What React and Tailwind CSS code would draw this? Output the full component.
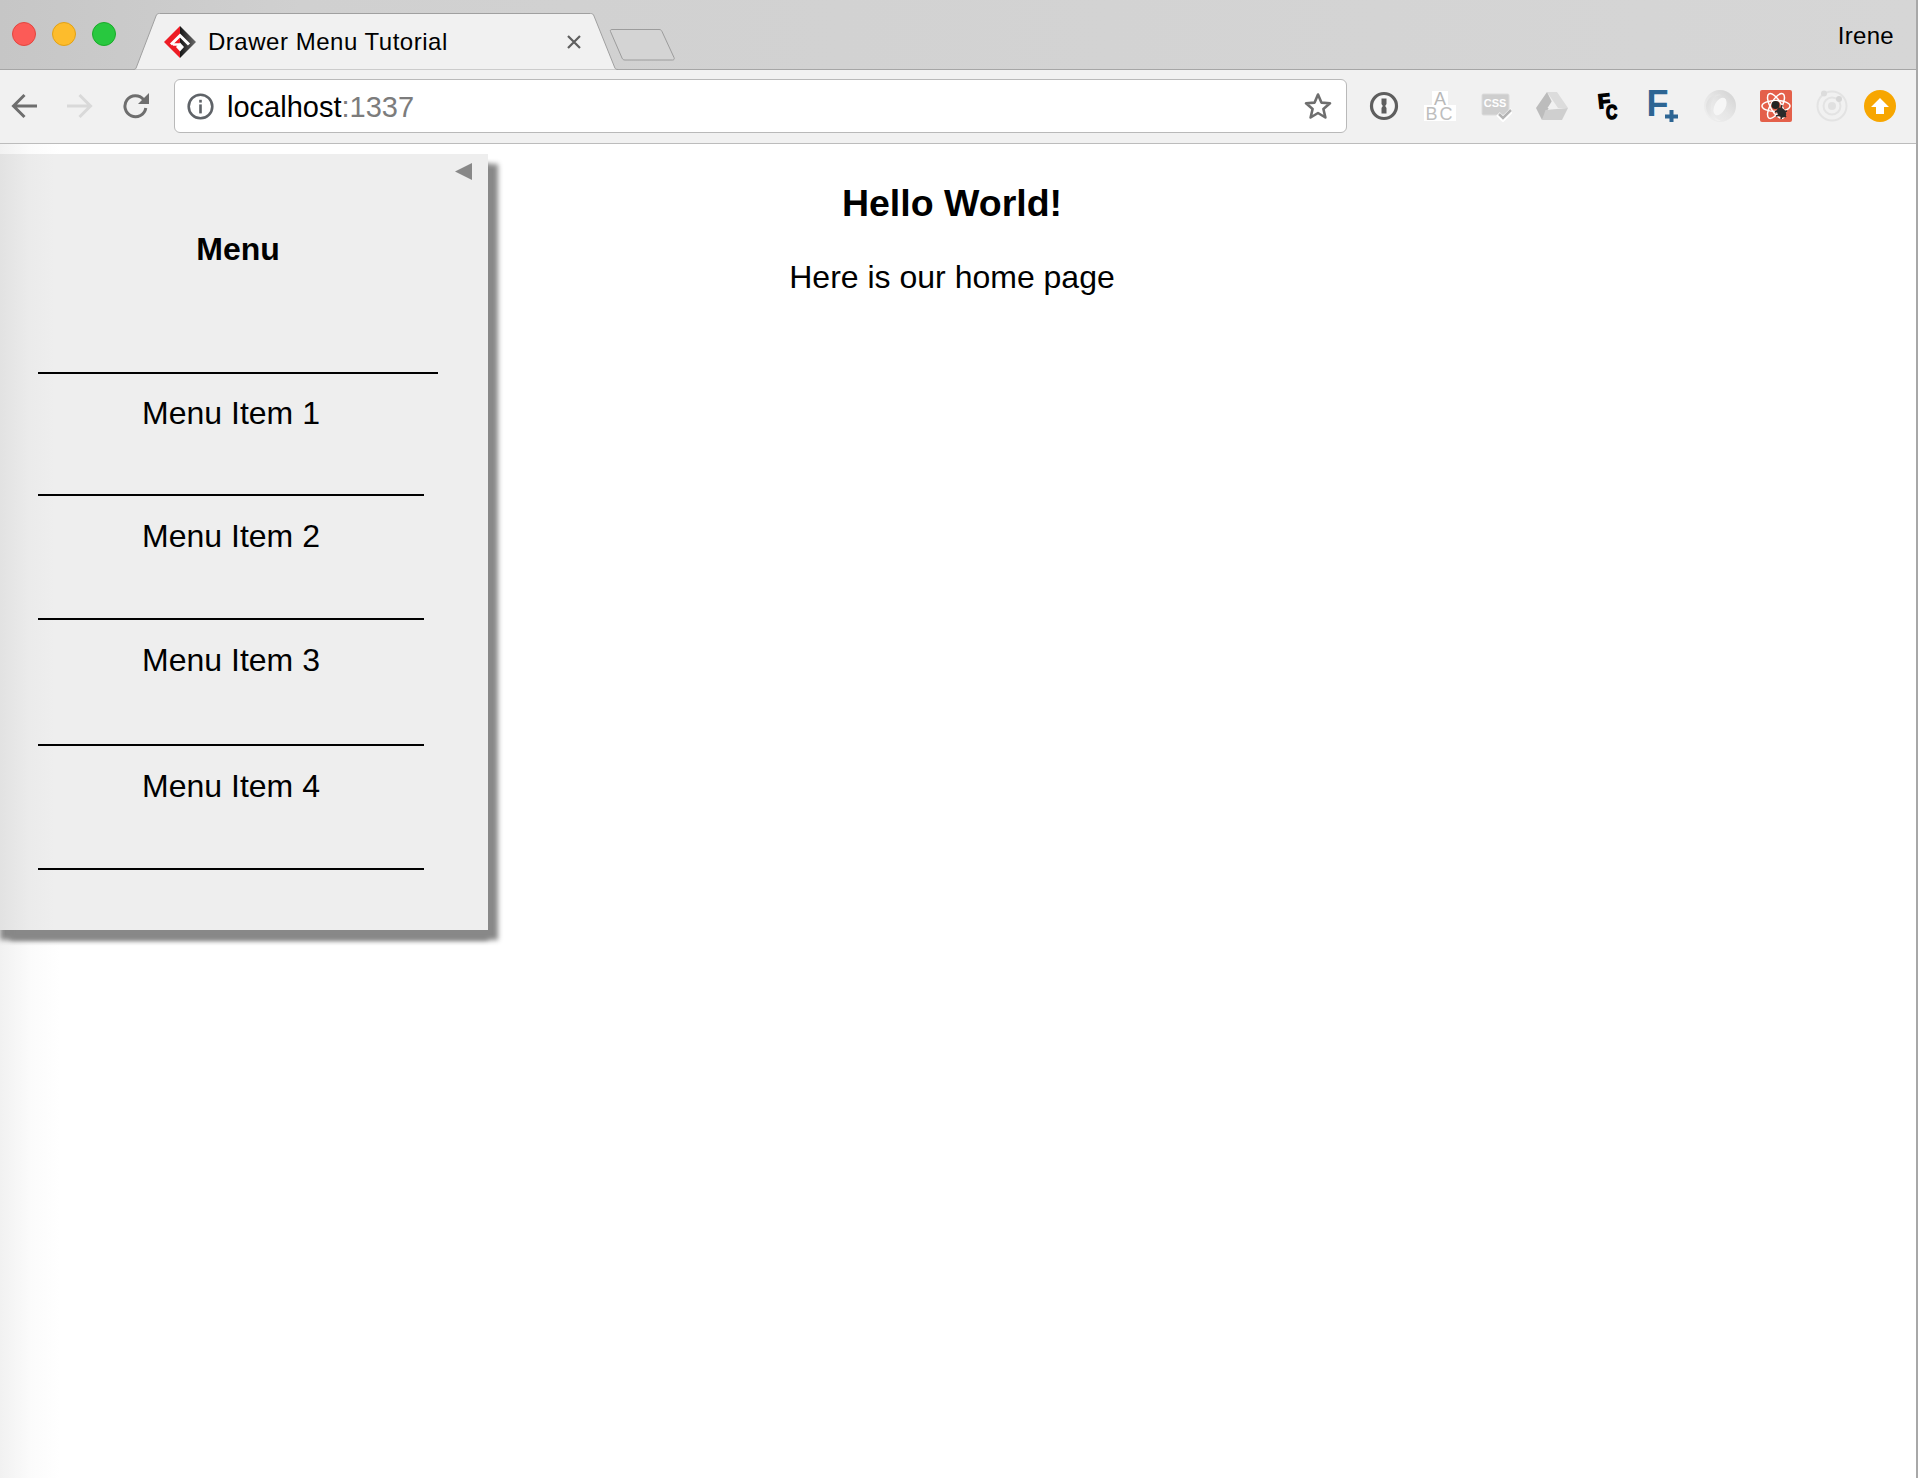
import React from 'react';

const sans = "font-['Liberation_Sans',Arial,sans-serif]";

const menuItems = [
  { label: 'Menu Item 1', row: 'h-[122px] pt-[20px]' },
  { label: 'Menu Item 2', row: 'h-[124px] pt-[21px]' },
  { label: 'Menu Item 3', row: 'h-[126px] pt-[21px]' },
  { label: 'Menu Item 4', row: 'h-[124px] pt-[21px]' },
];

const Favicon = () => (
  <svg width="32" height="32" viewBox="0 0 32 32" className="shrink-0">
    <defs>
      <linearGradient id="favDark" x1="0" y1="0" x2="1" y2="0">
        <stop offset="0" stopColor="#161616" />
        <stop offset="1" stopColor="#6c6c6c" />
      </linearGradient>
    </defs>
    <polygon points="16,0 32,16 16,32" fill="url(#favDark)" />
    <polygon points="16,0 16,32 0,16" fill="#ee1c25" />
    <path d="M7 18.500 16 9.500l9 9" fill="none" stroke="#fff" strokeWidth="3" />
    <path d="M9 18.500h6" fill="none" stroke="#fff" strokeWidth="2.500" />
    <polygon points="16,16.500 20,21 16,25.500 12,21" fill="#fff" />
  </svg>
);

const BackIcon = ({ color, flip }) => (
  <svg width="26" height="26" viewBox="0 0 26 26" fill="none" stroke={color} strokeWidth="3" className={flip ? '-scale-x-100' : ''}>
    <path d="M26 13H3M13.500 2 2.500 13l11 11" />
  </svg>
);

const ReloadIcon = () => (
  <svg width="26" height="26" viewBox="0 0 26 26" fill="none" className="shrink-0">
    <path d="M20.500 6.500A10.500 10.500 0 1 0 22.800 15" stroke="#6e6e6e" strokeWidth="3" />
    <polygon points="26,0 26,11 15,11" fill="#6e6e6e" />
  </svg>
);

const InfoIcon = () => (
  <svg width="27" height="27" viewBox="0 0 27 27" fill="none" className="shrink-0">
    <circle cx="13.500" cy="13.500" r="11.800" stroke="#5f6368" strokeWidth="2.600" />
    <rect x="12.200" y="6.800" width="2.600" height="2.800" fill="#5f6368" />
    <rect x="12.200" y="11.400" width="2.600" height="9" fill="#5f6368" />
  </svg>
);

const StarIcon = () => (
  <svg width="28" height="28" viewBox="0 0 28 28" fill="none" className="shrink-0">
    <polygon points="14,2.500 17.400,10.600 26,11.300 19.400,17 21.400,25.500 14,21 6.600,25.500 8.600,17 2,11.300 10.600,10.600" stroke="#6e6e6e" strokeWidth="2.600" strokeLinejoin="round" />
  </svg>
);

const OnePassword = () => (
  <svg width="32" height="32" viewBox="0 0 32 32" fill="none">
    <circle cx="16" cy="16" r="12.500" stroke="#5e5e5e" strokeWidth="3.200" fill="#f6f6f6" />
    <path d="M13.500 8.500h5v5.500l-1.300 2 1.300 2v5.500h-5V18l1.300-2-1.300-2z" fill="#5e5e5e" />
  </svg>
);

const AbcIcon = () => (
  <svg width="32" height="32" viewBox="0 0 32 32" className="overflow-visible">
    <rect x="8" y="1" width="16" height="14" fill="#fff" />
    <rect x="0" y="15" width="32" height="16" fill="#fff" />
    <text x="16" y="15" textAnchor="middle" fontSize="18" fill="#b8b8b8" fontFamily="Liberation Sans, sans-serif">A</text>
    <text x="16" y="30" textAnchor="middle" fontSize="18" fill="#bebebe" letterSpacing="2" fontFamily="Liberation Sans, sans-serif">BC</text>
  </svg>
);

const CssIcon = () => (
  <svg width="32" height="32" viewBox="0 0 32 32">
    <rect x="2" y="4" width="27" height="21" rx="1.500" fill="#cecece" stroke="#dcdcdc" />
    <text x="15" y="17" textAnchor="middle" fontSize="11" fontWeight="700" fill="#fff" fontFamily="Liberation Sans, sans-serif">CSS</text>
    <path d="M18 24l5 5 9-9" fill="none" stroke="#fff" strokeWidth="5" />
    <path d="M19 24l4 4 8-8" fill="none" stroke="#b4b4b4" strokeWidth="2.500" />
  </svg>
);

const DriveIcon = () => (
  <svg width="32" height="32" viewBox="0 0 32 32">
    <polygon points="11,2 21,2 32,18 22,18" fill="#dcdcdc" />
    <polygon points="11,2 16,12 6,30 0,18" fill="#bcbcbc" />
    <polygon points="9.500,20 32,18 26,30 6,30" fill="#cfcfcf" />
    <polygon points="16,11 20.500,18 11.500,18" fill="#f1f1f1" />
  </svg>
);

const FcIcon = () => (
  <svg width="32" height="32" viewBox="0 0 32 32" className="overflow-visible">
    <text x="6" y="18" fontSize="20" fontWeight="700" stroke="#000" strokeWidth="1.500" fontFamily="Liberation Sans, sans-serif" transform="rotate(-6 10 12)">F</text>
    <text fontSize="20" fontWeight="700" stroke="#000" strokeWidth="1.500" fontFamily="Liberation Sans, sans-serif" transform="translate(14 29) scale(.78 1)">C</text>
  </svg>
);

const FplusIcon = () => (
  <svg width="32" height="32" viewBox="0 0 32 32" className="overflow-visible">
    <text x="-1.500" y="26" fontSize="36" fontWeight="700" fill="#2d6593" fontFamily="Liberation Sans, sans-serif">F</text>
    <rect x="17" y="24.500" width="13" height="4" fill="#2d6593" />
    <rect x="21.500" y="20" width="4" height="12" fill="#2d6593" />
  </svg>
);

const JsonIcon = () => (
  <svg width="32" height="32" viewBox="0 0 32 32">
    <defs>
      <linearGradient id="jsonRing" x1="0" y1="1" x2="1" y2="0">
        <stop offset="0" stopColor="#f0f0f0" />
        <stop offset="0.5" stopColor="#e6e6e6" />
        <stop offset="1" stopColor="#d0d0d0" />
      </linearGradient>
      <linearGradient id="jsonInner" x1="0" y1="0" x2="1" y2="1">
        <stop offset="0" stopColor="#dcdcdc" />
        <stop offset="1" stopColor="#f4f4f4" />
      </linearGradient>
    </defs>
    <circle cx="16" cy="16" r="16" fill="url(#jsonRing)" />
    <path d="M2 16C3 8 10 3 17 5 9 6 7 12 7 17c0 6 4 12 10 14C8 31 2 24 2 16z" fill="url(#jsonInner)" />
    <ellipse cx="16" cy="16.500" rx="5.500" ry="9.500" transform="rotate(28 16 16.500)" fill="#f6f6f6" />
  </svg>
);

const ReactIcon = () => (
  <svg width="32" height="32" viewBox="0 0 32 32">
    <rect width="32" height="32" rx="2" fill="#e4604a" />
    <g fill="none" stroke="#fff" strokeWidth="1.500">
      <ellipse cx="16" cy="16" rx="14" ry="5.500" />
      <ellipse cx="16" cy="16" rx="14" ry="5.500" transform="rotate(60 16 16)" />
      <ellipse cx="16" cy="16" rx="14" ry="5.500" transform="rotate(120 16 16)" />
    </g>
    <circle cx="15.500" cy="15" r="4" fill="#222" />
    <ellipse cx="21.500" cy="22.500" rx="4" ry="5.500" transform="rotate(-40 21.500 22.500)" fill="#2a2a2a" />
    <g stroke="#2a2a2a" strokeWidth="1.500">
      <path d="M15 22l4-2M16 26l4-1M21 29l1-4M26 27l-3-3M27 21l-4 1M22 15l-1 4" />
    </g>
  </svg>
);

const IonIcon = () => (
  <svg width="32" height="32" viewBox="0 0 32 32" fill="none">
    <circle cx="16" cy="16" r="14.500" stroke="#e3e3e3" strokeWidth="2" />
    <circle cx="16" cy="16" r="8.500" stroke="#e3e3e3" strokeWidth="2" />
    <circle cx="16" cy="16" r="4" fill="#e0e0e0" />
    <circle cx="8" cy="3.500" r="3" fill="#dcdcdc" />
    <circle cx="23" cy="9" r="3" fill="#d6d6d6" />
  </svg>
);

const UpdateIcon = () => (
  <svg width="32" height="32" viewBox="0 0 32 32">
    <circle cx="16" cy="16" r="16" fill="#f7a600" />
    <polygon points="16,8 25,17 20,17 20,24 12,24 12,17 7,17" fill="#fff" />
  </svg>
);

const TabBar = () => (
  <div className="flex h-[70px] items-start border-b border-[#a6a6a6] bg-[linear-gradient(90deg,#c6c6c6,#d0d0d0_300px,#d6d6d6)]">
    <div className="flex gap-4 pl-3 pt-[22px]">
      <span className="h-6 w-6 rounded-full border border-[#e2463f] bg-[#fc5b57]" />
      <span className="h-6 w-6 rounded-full border border-[#e1a116] bg-[#fdbc2c]" />
      <span className="h-6 w-6 rounded-full border border-[#1aab29] bg-[#28c83f]" />
    </div>
    <div className="relative ml-[17px] mt-[13px] flex h-[57px] w-[486px] items-center pl-[31px] pr-[38px]">
      <svg width="486" height="57" viewBox="0 0 486 57" className="absolute left-0 top-0">
        <path d="M0.500 56.500c2 0 2.500-1 3-2.500L23 3c.7-1.800 1.500-2.500 3.500-2.500h431c2 0 2.800.7 3.500 2.500l20.500 51c.5 1.500 1 2.500 3.500 2.500" fill="#f1f1f1" stroke="#a0a0a0" />
      </svg>
      <div className="relative flex w-full items-center">
        <Favicon />
        <span className={`ml-[12px] text-[24px] leading-[32px] tracking-[0.52px] text-black ${sans}`}>Drawer Menu Tutorial</span>
        <svg width="14" height="14" viewBox="0 0 14 14" className="ml-auto" stroke="#5f5f5f" strokeWidth="2.200">
          <path d="M1 1l12 12M13 1 1 13" />
        </svg>
      </div>
    </div>
    <svg width="68" height="34" viewBox="0 0 68 34" fill="#d4d4d4" stroke="#9c9c9c" className="-ml-[10px] mt-[28px]">
      <path d="M3 1.500h47c1.500 0 2.300.5 3 2l12 26c.7 1.500 0 2.500-1.500 2.500H16c-1.500 0-2.400-.6-3-2L1.500 3.500C1 2.200 1.500 1.500 3 1.500z" />
    </svg>
    <span className={`ml-auto mr-[22px] mt-[22px] text-[24px] leading-[28px] tracking-[0.3px] text-black ${sans}`}>Irene</span>
  </div>
);

const Toolbar = () => (
  <div className="flex h-[74px] items-center border-b border-[#bcbcbc] bg-[#f1f1f1] pb-[1px] pl-[11px]">
    <div className="flex items-center gap-[30px]">
      <BackIcon color="#6e6e6e" />
      <BackIcon color="#d9d9d9" flip />
      <ReloadIcon />
    </div>
    <div className="ml-[25px] flex h-[54px] w-[1173px] items-center rounded-md border border-[#b9b9b9] bg-white pl-3 pr-[14px]">
      <InfoIcon />
      <span className={`ml-[13px] pt-[2px] text-[29px] leading-[36px] text-black ${sans}`}>
        localhost<span className="text-[#7c7c7c]">:1337</span>
      </span>
      <span className="ml-auto flex">
        <StarIcon />
      </span>
    </div>
    <div className="ml-[21px] flex items-center gap-6">
      <OnePassword />
      <AbcIcon />
      <CssIcon />
      <DriveIcon />
      <FcIcon />
      <FplusIcon />
      <JsonIcon />
      <ReactIcon />
      <IonIcon />
      <span className="-ml-2 flex">
        <UpdateIcon />
      </span>
    </div>
  </div>
);

const Drawer = () => (
  <aside className={`relative z-10 mt-[10px] h-[776px] w-[488px] shrink-0 bg-[linear-gradient(90deg,#e2e2e2,#ebebeb_30px,#eeeeee_55px)] shadow-[10px_10px_5px_#888888,0_10px_5px_#888888] ${sans}`}>
    <div className="flex justify-end pr-4 pt-[9px]">
      <svg width="17" height="17" viewBox="0 0 17 17">
        <polygon points="0,8.500 17,0 17,17" fill="#888888" />
      </svg>
    </div>
    <div className="ml-[38px] h-[194px] w-[400px] border-b-2 border-black pt-[50px] text-center text-[32px] font-bold leading-[38px] text-black">
      Menu
    </div>
    <ul className="ml-[38px] w-[386px]">
      {menuItems.map((item) => (
        <li key={item.label} className={`${item.row} border-b-2 border-black text-center text-[32px] leading-[38px] text-black`}>
          {item.label}
        </li>
      ))}
    </ul>
  </aside>
);

export default function App() {
  return (
    <div className="relative flex h-[1478px] w-full flex-col overflow-hidden border-r-2 border-[#a8a8a8] bg-white">
      <TabBar />
      <Toolbar />
      <div className="flex flex-1 items-start bg-[linear-gradient(90deg,#f1f1f1,#fbfbfb_30px,#ffffff_60px)]">
        <Drawer />
        <main className={`w-[928px] pt-[37px] text-center text-black ${sans}`}>
          <h1 className="text-[37.5px] font-bold leading-[44px]">Hello World!</h1>
          <p className="mt-[32px] text-[32px] leading-[40px]">Here is our home page</p>
        </main>
      </div>
      <span className="absolute right-[-2px] top-[818px] h-[10px] w-[2px] bg-[#333333]" />
    </div>
  );
}
